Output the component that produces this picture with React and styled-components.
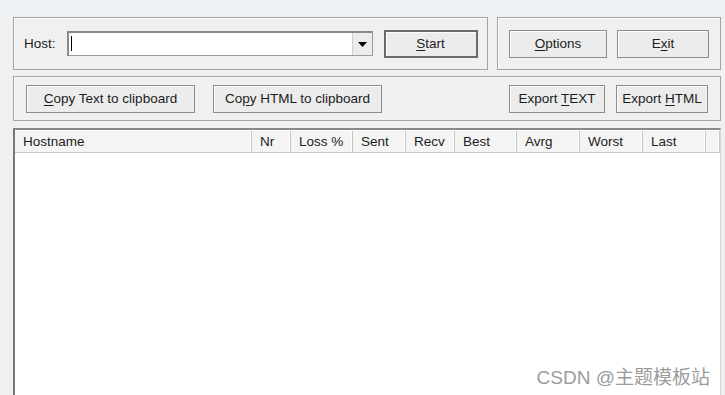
// Packages
import React from "react"
import styled, { createGlobalStyle } from "styled-components"

// Styles
const Global = createGlobalStyle`
    html, body {
        margin: 0;
        padding: 0;
        background-color: #f0f0f0;
        overflow: hidden;
    }

    body {
        font-family: "Liberation Sans", Arial, sans-serif;
        font-size: 13.5px;
        color: #1c1c1c;
    }
`

const Window = styled.div`
    width: 725px;
    height: 395px;
    display: flex;
    flex-direction: column;
    position: relative;
    overflow: hidden;
`

const TopStrip = styled.div`
    height: 17px;
    background-color: #eef1f6;
    flex-shrink: 0;
`

const Body = styled.div`
    flex: 1;
    padding: 0 4px 0 13px;
    display: flex;
    flex-direction: column;
    min-height: 0;
`

const Row = styled.div`
    display: flex;
    gap: 9px;
`

const Group = styled.div`
    box-sizing: border-box;
    width: ${p => (p.$w ? `${p.$w}px` : "100%")};
    height: ${p => p.$h}px;
    margin-top: ${p => p.$mt ?? 0}px;
    border: 1px solid #a3a3a3;
    box-shadow: inset 1px 1px 0 #fbfbfb;
    display: flex;
    align-items: center;
    padding: ${p => p.$pad ?? "0 10px"};
    gap: ${p => p.$gap ?? 10}px;
`

const Label = styled.span`
    margin-right: 11px;
`

const Combo = styled.div`
    box-sizing: border-box;
    width: 306px;
    height: 25px;
    flex-shrink: 0;
    border: 1px solid #9a9a9a;
    border-left: 2px solid #8a8a8a;
    border-top: 2px solid #8a8a8a;
    background-color: #fff;
    display: flex;
    align-items: stretch;
`

const Caret = styled.span`
    width: 1px;
    height: 15px;
    background-color: #000;
    margin: 3px 0 0 2px;
`

const Spacer = styled.div`
    flex: 1;
`

const DropButton = styled.div`
    width: 19px;
    background-color: #ececec;
    border-left: 1px solid #cfcfcf;
    display: flex;
    align-items: center;
    justify-content: center;
`

const Button = styled.div`
    box-sizing: border-box;
    width: ${p => p.$w}px;
    height: 28px;
    flex-shrink: 0;
    margin-left: ${p => p.$ml ?? 0}px;
    border: ${p => (p.$default ? "2px solid #6a6a6a" : "1px solid #8c8c8c")};
    box-shadow: inset 1px 1px 0 #fdfdfd;
    background-color: #ececec;
    display: flex;
    align-items: center;
    justify-content: center;
    white-space: nowrap;

    u {
        text-decoration: underline;
        text-underline-offset: 2px;
    }
`

const List = styled.div`
    box-sizing: border-box;
    margin-top: 7px;
    flex: 1;
    border-left: 2px solid #777;
    border-top: 2px solid #888;
    border-right: 1px solid #d6d6d6;
    background-color: #fff;
    display: flex;
    flex-direction: column;
`

const Header = styled.div`
    display: flex;
    height: 21px;
    margin-top: 1px;
    border-bottom: 1px solid #c9c9c9;
    background-color: #f4f4f4;
`

const HeaderCell = styled.div`
    box-sizing: border-box;
    width: ${p => p.$w}px;
    flex: ${p => (p.$w ? "none" : 1)};
    border-right: 1px solid #c4c4c4;
    box-shadow: inset -1px 0 0 #fff;
    padding-left: 8px;
    display: flex;
    align-items: center;
    white-space: nowrap;
`

const Watermark = styled.div`
    position: absolute;
    right: 15px;
    bottom: 6px;
    font-family: "Liberation Sans", "Noto Sans CJK SC", sans-serif;
    font-size: 19px;
    color: #9c9c9c;
`

// Data
const columns = [
    { text: "Hostname", w: 237 },
    { text: "Nr", w: 39 },
    { text: "Loss %", w: 62 },
    { text: "Sent", w: 53 },
    { text: "Recv", w: 49 },
    { text: "Best", w: 62 },
    { text: "Avrg", w: 63 },
    { text: "Worst", w: 63 },
    { text: "Last", w: 63 },
    { text: "" },
]

function App() {
    return (
        <Window>
            <Global />
            <TopStrip />

            <Body>
                <Row>
                    <Group $w={475} $h={53} $gap={0}>
                        <Label>Host:</Label>
                        <Combo>
                            <Caret />
                            <Spacer />
                            <DropButton>
                                <svg width="9" height="5" viewBox="0 0 9 5">
                                    <path d="M0 0h9L4.5 5z" fill="#000" />
                                </svg>
                            </DropButton>
                        </Combo>
                        <Button $w={94} $ml={11} $default>
                            <span><u>S</u>tart</span>
                        </Button>
                    </Group>

                    <Group $w={225} $h={53} $pad="0 11px" $gap={10}>
                        <Button $w={98}>
                            <span><u>O</u>ptions</span>
                        </Button>
                        <Button $w={92}>
                            <span>E<u>x</u>it</span>
                        </Button>
                    </Group>
                </Row>

                <Group $h={45} $mt={6} $pad="0 12px" $gap={0}>
                    <Button $w={169}>
                        <span><u>C</u>opy Text to clipboard</span>
                    </Button>
                    <Button $w={169} $ml={18}>
                        <span>Co<u>p</u>y HTML to clipboard</span>
                    </Button>
                    <Spacer />
                    <Button $w={96}>
                        <span>Export <u>T</u>EXT</span>
                    </Button>
                    <Button $w={92} $ml={11}>
                        <span>Export <u>H</u>TML</span>
                    </Button>
                </Group>

                <List>
                    <Header>
                        {columns.map((col, i) => (
                            <HeaderCell key={i} $w={col.w}>
                                {col.text}
                            </HeaderCell>
                        ))}
                    </Header>
                </List>
            </Body>

            <Watermark>CSDN @主题模板站</Watermark>
        </Window>
    )
}

export default App
